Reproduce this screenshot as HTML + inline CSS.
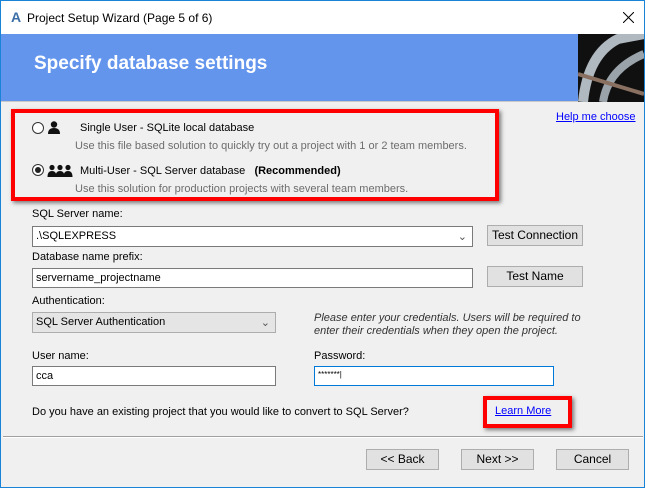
<!DOCTYPE html>
<html><head><style>
*{box-sizing:border-box;margin:0;padding:0}
body{width:645px;height:488px;overflow:hidden;background:#fff;font-family:"Liberation Sans",sans-serif;font-size:11px;color:#000;position:relative}
.win{position:absolute;left:0;top:0;width:645px;height:488px;border:1px solid #1883d7;background:#f0f0f0}
.a{position:absolute;white-space:nowrap}
.tb{position:absolute;left:0;top:0;width:643px;height:33px;background:#fff}
.ban{position:absolute;left:0;top:33px;width:643px;height:68px;background:#6495ed;border-bottom:1px solid #c8c8c8}
.inp{position:absolute;background:#fff;border:1px solid #7a7a7a;padding:3px 3px;font-size:11px}
.btn{position:absolute;background:#e1e1e1;border:1px solid #adadad;text-align:center;font-size:12px;line-height:19px}
.gray{color:#6d6d6d}
.link{color:#0000ff;text-decoration:underline;font-size:12px}
.red{position:absolute;border:4px solid #ff0000;box-shadow:2px 2px 4px rgba(0,0,0,.5)}
.radio{position:absolute;width:12px;height:12px;border:1px solid #333;border-radius:50%;background:#fff}
</style></head><body>
<div class="win">
<div class="tb">
 <div class="a" style="left:10px;top:8px;font-weight:bold;color:#3a6ea5;font-size:14px">A</div>
 <div class="a" style="left:26px;top:10px;font-size:12px">Project Setup Wizard (Page 5 of 6)</div>
 <svg style="position:absolute;left:622px;top:11px" width="11" height="11"><path d="M0 0L11 11M11 0L0 11" stroke="#000" stroke-width="1"/></svg>
</div>
<div class="ban">
 <div class="a" style="left:33px;top:19px;color:#fff;font-weight:bold;font-size:19px">Specify database settings</div>
 <svg style="position:absolute;left:577px;top:0" width="66" height="68"><rect width="66" height="68" fill="#101010"/><path d="M5 68 Q10 20 40 5 L66 0" stroke="#b0b8c0" stroke-width="10" fill="none"/><path d="M25 68 Q30 35 66 20" stroke="#9aa3aa" stroke-width="8" fill="none"/><path d="M0 40 L66 60" stroke="#8a7060" stroke-width="4"/></svg>
</div>
<div class="red" style="left:10px;top:108px;width:488px;height:92px"></div>
<div class="radio" style="left:31px;top:121px"></div>
<svg style="position:absolute;left:46px;top:120px" width="14" height="13"><circle cx="7" cy="3.5" r="3.2" fill="#111"/><path d="M1 13 Q1 7 7 7 Q13 7 13 13Z" fill="#111"/></svg>
<div class="a" style="left:79px;top:121px">Single User - SQLite local database</div>
<div class="a gray" style="left:74px;top:139px">Use this file based solution to quickly try out a project with 1 or 2 team members.</div>
<div class="radio" style="left:31px;top:163px"><div style="position:absolute;left:2px;top:2px;width:6px;height:6px;border-radius:50%;background:#222"></div></div>
<svg style="position:absolute;left:46px;top:163px" width="26" height="13"><g fill="#111"><circle cx="5" cy="3.5" r="2.6"/><path d="M0.5 13Q0.5 7 5 7Q9.5 7 9.5 13Z"/><circle cx="13" cy="3.5" r="2.6"/><path d="M8.5 13Q8.5 7 13 7Q17.5 7 17.5 13Z"/><circle cx="21" cy="3.5" r="2.6"/><path d="M16.5 13Q16.5 7 21 7Q25.5 7 25.5 13Z"/></g></svg>
<div class="a" style="left:79px;top:164px">Multi-User - SQL Server database &nbsp;&nbsp;<b>(Recommended)</b></div>
<div class="a gray" style="left:74px;top:182px">Use this solution for production projects with several team members.</div>
<div class="a link" style="left:555px;top:110px;font-size:11px">Help me choose</div>

<div class="a" style="left:31px;top:207px">SQL Server name:</div>
<div class="inp" style="left:31px;top:225px;width:441px;height:21px">.\SQLEXPRESS<span style="position:absolute;right:5px;top:3px;color:#555">&#8964;</span></div>
<div class="btn" style="left:486px;top:224px;width:96px;height:21px">Test Connection</div>
<div class="a" style="left:31px;top:250px">Database name prefix:</div>
<div class="inp" style="left:31px;top:267px;width:441px;height:20px">servername_projectname</div>
<div class="btn" style="left:486px;top:265px;width:96px;height:21px">Test Name</div>
<div class="a" style="left:31px;top:294px">Authentication:</div>
<div class="inp" style="left:31px;top:311px;width:244px;height:21px;background:#e5e5e5;border-color:#adadad">SQL Server Authentication<span style="position:absolute;right:5px;top:3px;color:#555">&#8964;</span></div>
<div class="a" style="left:313px;top:311px;font-style:italic;color:#333;line-height:13px">Please enter your credentials. Users will be required to<br>enter their credentials when they open the project.</div>
<div class="a" style="left:31px;top:349px">User name:</div>
<div class="inp" style="left:31px;top:365px;width:244px;height:20px">cca</div>
<div class="a" style="left:313px;top:349px">Password:</div>
<div class="inp" style="left:313px;top:365px;width:240px;height:20px;border-color:#0078d7;font-size:8px;padding-top:3px">*******|</div>
<div class="a" style="left:31px;top:405px">Do you have an existing project that you would like to convert to SQL Server?</div>
<div class="red" style="left:482px;top:395px;width:89px;height:32px"></div>
<div class="a link" style="left:494px;top:404px;font-size:11px">Learn More</div>
<div style="position:absolute;left:2px;top:435px;width:640px;height:1px;background:#a0a0a0"></div>
<div style="position:absolute;left:2px;top:436px;width:640px;height:1px;background:#fff"></div>
<div class="btn" style="left:365px;top:448px;width:73px;height:21px">&lt;&lt; Back</div>
<div class="btn" style="left:460px;top:448px;width:73px;height:21px">Next &gt;&gt;</div>
<div class="btn" style="left:555px;top:448px;width:73px;height:21px">Cancel</div>
</div>
</body></html>
